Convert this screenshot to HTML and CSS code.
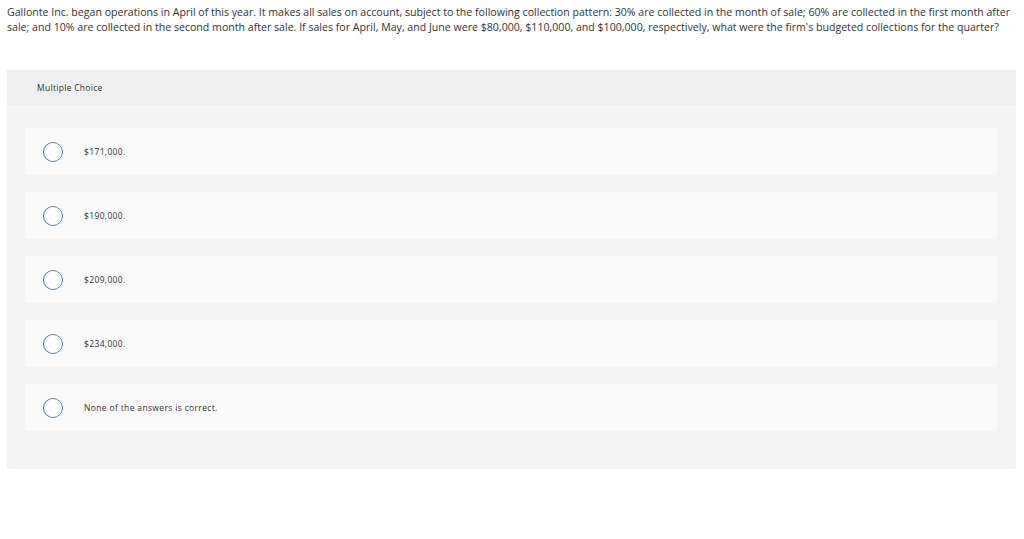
FILE: index.html
```html
<!DOCTYPE html>
<html>
<head>
<meta charset="utf-8">
<link rel="stylesheet" href="styles.css">
</head>
<body>
<p class="question">Gallonte Inc. began operations in April of this year. It makes all sales on account, subject to the following collection pattern: 30% are collected in the month of sale; 60% are collected in the first month after sale; and 10% are collected in the second month after sale. If sales for April, May, and June were $80,000, $110,000, and $100,000, respectively, what were the firm's budgeted collections for the quarter?</p>
<div class="mc">
  <div class="mc-header">Multiple Choice</div>
  <div class="mc-body">
    <div class="option"><span class="radio"></span><span class="label">$171,000.</span></div>
    <div class="option"><span class="radio"></span><span class="label">$190,000.</span></div>
    <div class="option"><span class="radio"></span><span class="label">$209,000.</span></div>
    <div class="option"><span class="radio"></span><span class="label">$234,000.</span></div>
    <div class="option"><span class="radio"></span><span class="label">None of the answers is correct.</span></div>
  </div>
</div>
</body>
</html>
```
FILE: styles.css
```css
html, body {
  margin: 0;
  padding: 0;
  background: #ffffff;
}
body {
  padding: 5px 8px 0 7px;
  font-family: "Open Sans", "Liberation Sans", sans-serif;
  color: #333333;
}
.question {
  margin: 0 -8px 0 0;
  font-size: 10.6px;
  line-height: 15px;
  color: #333;
}
.mc {
  margin-top: 35px;
  background: #f4f4f4;
  border-radius: 2px;
  padding-bottom: 38px;
}
.mc-header {
  background: #efefef;
  height: 35px;
  display: flex;
  align-items: center;
  padding-left: 30px;
  font-size: 8.5px;
  letter-spacing: 0.3px;
  color: #333;
}
.mc-body {
  padding: 23px 19px 0 18px;
  display: flex;
  flex-direction: column;
  gap: 17px;
}
.option {
  background: #fafafa;
  border-radius: 3px;
  height: 47px;
  display: flex;
  align-items: center;
  padding-left: 18px;
}
.radio {
  width: 18px;
  height: 18px;
  border: 1px solid #5d7fa3;
  border-radius: 50%;
  background: #fff;
  flex-shrink: 0;
}
.label {
  margin-left: 21px;
  font-size: 8.5px;
  letter-spacing: 0.35px;
  color: #333;
}
```
